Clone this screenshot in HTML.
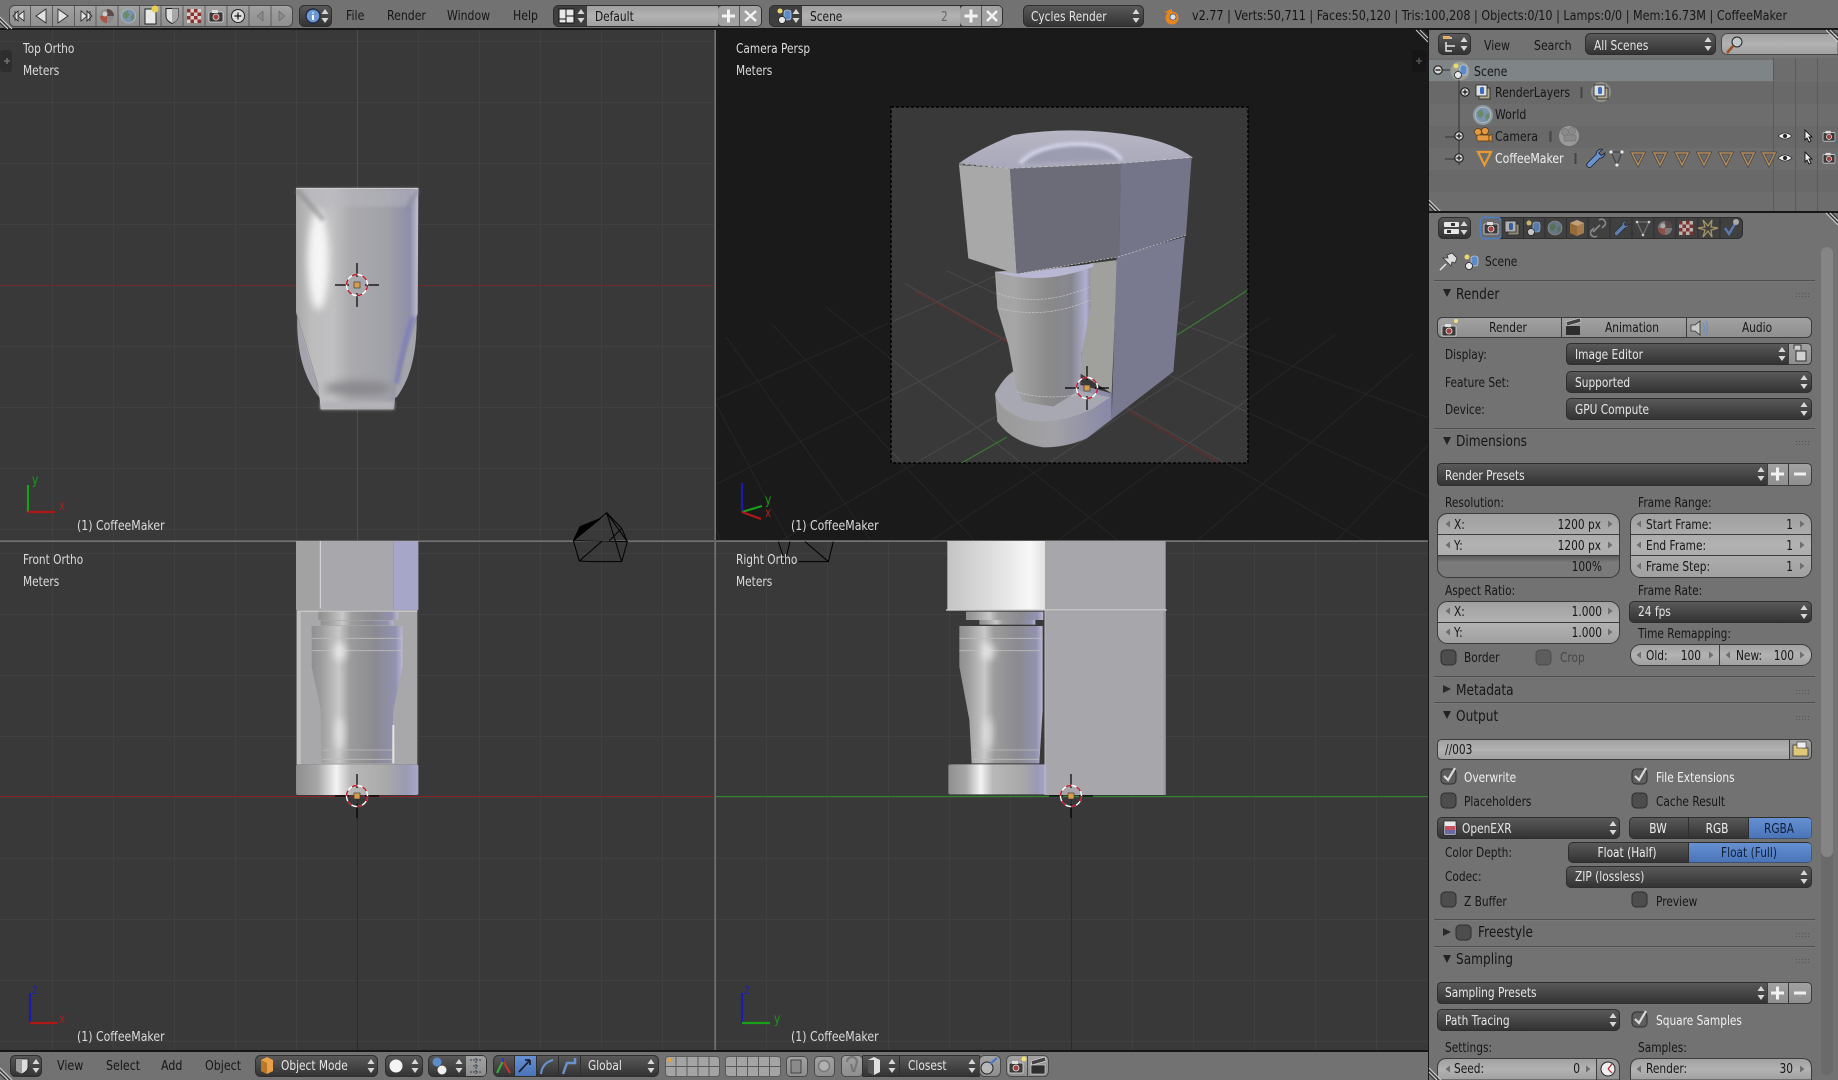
<!DOCTYPE html>
<html><head><meta charset="utf-8"><title>Blender</title>
<style>
html,body{margin:0;padding:0;background:#727272;width:1838px;height:1080px;overflow:hidden}
body{filter:blur(.35px)}
svg{position:absolute;left:0;top:0}
span{position:absolute;white-space:nowrap;font:13.5px/16px "DejaVu Sans",sans-serif;height:16px;color:#161616;transform:scaleX(.785);transform-origin:0 50%}
.n{transform:scaleX(.81)}
.w{color:#e6e6e6}
.v{color:#dcdcdc}
.h{font-size:15.5px}
.c{transform:translateX(-50%) scaleX(.785);transform-origin:50% 50%}
.r{transform:translateX(-100%) scaleX(.785);transform-origin:100% 50%}
.f{color:#474747}
.k{color:#f0f0f0}
</style></head><body>
<svg width="1838" height="1080" viewBox="0 0 1838 1080" xmlns="http://www.w3.org/2000/svg">
<defs>
<linearGradient id="gd" x1="0" y1="0" x2="0" y2="1"><stop offset="0" stop-color="#5a5a5a"/><stop offset="1" stop-color="#323232"/></linearGradient>
<linearGradient id="gl" x1="0" y1="0" x2="0" y2="1"><stop offset="0" stop-color="#a0a0a0"/><stop offset=".5" stop-color="#b2b2b2"/><stop offset="1" stop-color="#a0a0a0"/></linearGradient>
<linearGradient id="gb" x1="0" y1="0" x2="0" y2="1"><stop offset="0" stop-color="#a2a2a2"/><stop offset="1" stop-color="#8e8e8e"/></linearGradient>
<linearGradient id="gm" x1="0" y1="0" x2="0" y2="1"><stop offset="0" stop-color="#5a5a5a"/><stop offset=".3" stop-color="#7a7a7a"/><stop offset="1" stop-color="#7a7a7a"/></linearGradient>
<linearGradient id="ga" x1="0" y1="0" x2="0" y2="1"><stop offset="0" stop-color="#6590d2"/><stop offset="1" stop-color="#4a74b8"/></linearGradient>
<linearGradient id="gt" x1="0" y1="0" x2="1" y2="0"><stop offset="0" stop-color="#a8a8a8"/><stop offset=".12" stop-color="#bcbcbc"/><stop offset=".3" stop-color="#c0c0c2"/><stop offset=".45" stop-color="#aaaaae"/><stop offset=".75" stop-color="#a0a0a8"/><stop offset=".93" stop-color="#8f8fa8"/><stop offset="1" stop-color="#c0c0d0"/></linearGradient>
<linearGradient id="gc" x1="0" y1="0" x2="1" y2="0"><stop offset="0" stop-color="#8f8f8f"/><stop offset=".1" stop-color="#9c9c9c"/><stop offset=".3" stop-color="#c8c8c8"/><stop offset=".42" stop-color="#9c9c9c"/><stop offset=".7" stop-color="#8a8a90"/><stop offset=".92" stop-color="#9292b0"/><stop offset="1" stop-color="#b8b8d0"/></linearGradient>
<linearGradient id="gbase" x1="0" y1="0" x2="1" y2="0"><stop offset="0" stop-color="#8e8e8e"/><stop offset=".18" stop-color="#a8a8a8"/><stop offset=".33" stop-color="#f4f4f4"/><stop offset=".45" stop-color="#b8b8b8"/><stop offset=".75" stop-color="#a8a8a8"/><stop offset=".9" stop-color="#9a9ab4"/><stop offset="1" stop-color="#a8a8c8"/></linearGradient>
<linearGradient id="ghd" x1="0" y1="0" x2="1" y2="0"><stop offset="0" stop-color="#c4c4c4"/><stop offset=".5" stop-color="#e0e0e0"/><stop offset=".85" stop-color="#f8f8f8"/><stop offset="1" stop-color="#e0e0e0"/></linearGradient>
<linearGradient id="gdome" x1="0" y1="0" x2="0" y2="1"><stop offset="0" stop-color="#b6b6c4"/><stop offset="1" stop-color="#a8a8ba"/></linearGradient>
<linearGradient id="gcup3" x1="0" y1="0" x2="1" y2="0"><stop offset="0" stop-color="#a4a4a4"/><stop offset=".2" stop-color="#a6a6a6"/><stop offset=".55" stop-color="#8a8a8a"/><stop offset=".8" stop-color="#86868f"/><stop offset=".95" stop-color="#b0b0d0"/><stop offset="1" stop-color="#9090a0"/></linearGradient>
<linearGradient id="gbase3" x1="0" y1="0" x2="1" y2="0"><stop offset="0" stop-color="#9a9a9a"/><stop offset=".5" stop-color="#a2a2a6"/><stop offset="1" stop-color="#8888a8"/></linearGradient>
<filter id="bl" x="-50%" y="-50%" width="200%" height="200%"><feGaussianBlur stdDeviation="12"/></filter>
<filter id="bs" x="-50%" y="-50%" width="200%" height="200%"><feGaussianBlur stdDeviation="5"/></filter>

<g id="ud"><path d="M0-7L3.5-2H-3.5ZM0 7L3.5 2H-3.5Z" fill="#d8d8d8"/></g>
<path id="la" d="M3-3.5V3.5L-1.5 0Z" fill="#6e6e6e"/>
<path id="ra" d="M-3-3.5V3.5L1.5 0Z" fill="#6e6e6e"/>
<g id="cur">
<path d="M-22 0H-8M8 0H22M0-22V-8M0 8V22" stroke="#000" stroke-width="1.2"/>
<circle r="10.5" fill="none" stroke="#fff" stroke-width="1.4"/>
<circle r="10.5" fill="none" stroke="#c01828" stroke-width="1.4" stroke-dasharray="5.5 5.5"/>
<rect x="-3" y="-3" width="6" height="6" fill="#d89c4c" stroke="#333" stroke-width=".6"/>
</g>
<g id="hat" stroke-width="1"><path d="M0 0L12 12M4 0L12 8" stroke="#cfcfcf"/><path d="M2 0L12 10M6 0L12 6" stroke="#333"/></g>
<g id="hat2" stroke-width="1"><path d="M0 0L12 12M0 4L8 12" stroke="#cfcfcf"/><path d="M0 2L10 12M0 6L6 12" stroke="#333"/></g>
<g id="cam"><rect x="-7" y="-4" width="14" height="10" rx="1" fill="#3a3a3a" stroke="#ddd" stroke-width=".8"/><rect x="-4" y="-6" width="6" height="3" fill="#ddd"/><circle r="3" cy="1" fill="#a04040" stroke="#eee" stroke-width=".8"/></g>
<g id="sph"><circle r="7" fill="#8a8a8a"/><path d="M0-7A7 7 0 0 1 7 0H0Z" fill="#5e4a4a"/><path d="M0 0V7A7 7 0 0 1-7 0Z" fill="#a85448"/><circle cx="-2" cy="-2" r="2.5" fill="#ccc"/></g>
<g id="glob"><circle r="7" fill="#7a94ae" stroke="#c8c8c8" stroke-width=".6"/><path d="M-5-3L-1-5 1-1-2 3-5 1ZM2 0L5-2 6 2 3 5Z" fill="#6a8a6a"/></g>
<g id="chk"><rect x="-7" y="-7" width="14" height="14" fill="#d8d0cc"/><path d="M-7-7h3.500v3.500h-3.500zM0-7h3.500v3.500h-3.500zM-3.500-3.500h3.500v3.500h-3.500zM3.500-3.500h3.500v3.500h-3.500zM-7 0h3.500v3.500h-3.500zM0 0h3.500v3.500h-3.500zM-3.500 3.500h3.500v3.500h-3.500zM3.500 3.500h3.500v3.500h-3.500z" fill="#8e3030"/></g>
<g id="shd"><path d="M-6-7H6V1Q6 5 0 8-6 5-6 1Z" fill="#dedede" stroke="#222" stroke-width="1"/><path d="M0-7H6V1Q6 5 0 8Z" fill="#a8a8a8"/></g>
<g id="tri"><path d="M-6-5H6L0 7Z" fill="none" stroke="#4a4a4a" stroke-width="3"/><path d="M-6-5H6L0 7Z" fill="none" stroke="#b58a58" stroke-width="1.400"/></g>
<g id="scn"><circle cx="-5" cy="-5" r="2.500" fill="#e8d870"/><rect x="-1" y="-6" width="7" height="10" rx="2.500" fill="#5c8cc8" stroke="#dde" stroke-width=".6"/><circle cx="-3" cy="4" r="3.500" fill="#e8e8e8" stroke="#222" stroke-width=".8"/></g>
<g id="rl"><rect x="-4" y="-4" width="11" height="11" fill="#b4a890" stroke="#222" stroke-width=".8"/><rect x="-7" y="-7" width="11" height="11" fill="#dedede" stroke="#222" stroke-width=".8"/><rect x="-3" y="-5" width="4" height="7" rx="1.500" fill="#3a6cc0"/></g>
<g id="wrn"><path d="M6-7A4 4 0 0 0 1-3L-6 4A2 2 0 0 0-3 7L4 0A4 4 0 0 0 8-4L5-2 3-4Z" fill="#6a94d0" stroke="#223" stroke-width=".7"/></g>
<g id="plus"><path d="M0-6.500V6.500M-6.500 0H6.500" stroke="#f2f2f2" stroke-width="3"/></g>
<g id="eye"><path d="M-7 0Q0-6 7 0 0 6-7 0Z" fill="#f0f0f0" stroke="#222" stroke-width=".8"/><circle r="2" fill="#222"/></g>
<path id="arw" d="M-3-6V4L-1 2 1 6 3 5 1 1H4Z" fill="#f0f0f0" stroke="#111" stroke-width=".9"/>
<g id="cb"><rect width="15" height="15" rx="4" fill="#4d4d4d" stroke="#2e2e2e" stroke-width="1"/></g>
<g id="cbc"><rect width="15" height="15" rx="4" fill="#5e5e5e" stroke="#2e2e2e" stroke-width="1"/><path d="M3 7L7 11 14-1" fill="none" stroke="#dcdcdc" stroke-width="2.200"/></g>
<g id="dots" fill="#555"><path d="M0 0h1v1h-1zM3 0h1v1h-1zM6 0h1v1h-1zM9 0h1v1h-1zM12 0h1v1h-1zM0 3h1v1h-1zM3 3h1v1h-1zM6 3h1v1h-1zM9 3h1v1h-1zM12 3h1v1h-1z"/></g>
<path id="td" d="M0 0H8L4 8Z" fill="#222"/>
<path id="tr" d="M0-4V4L8 0Z" fill="#2a2a2a"/>

<pattern id="grd1" width="61" height="61" patternUnits="userSpaceOnUse" x="52" y="41"><path d="M0 .5H61M.5 0V61" stroke="#404040" stroke-width="1" fill="none"/></pattern>
<pattern id="grd2" width="61" height="61" patternUnits="userSpaceOnUse" x="52" y="553"><path d="M0 .5H61M.5 0V61" stroke="#404040" stroke-width="1" fill="none"/></pattern>
<pattern id="grd3" width="61" height="61" patternUnits="userSpaceOnUse" x="766" y="553"><path d="M0 .5H61M.5 0V61" stroke="#404040" stroke-width="1" fill="none"/></pattern>
<clipPath id="cf"><rect x="892" y="108" width="356" height="355"/></clipPath>
<clipPath id="cv"><rect x="716" y="30" width="712" height="510"/></clipPath>
<clipPath id="cfield"><polygon points="700,345 1000,255 1440,360 1440,560 700,560"/></clipPath>
<clipPath id="gr1"><rect x="1437" y="513" width="183" height="65" rx="11"/></clipPath>
<g id="persp" clip-path="url(#cfield)" fill="none" stroke-width="1">
<path d="M545 82L1545 182M545 82L1545 262M545 82L1545 332M545 82L1545 392M545 82L1545 462M545 82L1545 552M545 82L1545 642M545 82L1345 722M545 82L1145 722M545 82L1000 722M545 82L885 722M545 82L790 722M545 82L700 722"/>
<path d="M2032-183L632 57M2032-183L632 137M2032-183L632 207M2032-183L632 287M2032-183L632 357M2032-183L632 437M2032-183L632 527M2032-183L632 627M2032-183L632 737M2032-183L632 857M2032-183L832 857M2032-183L1032 857"/>
</g>
</defs>

<!-- top header -->
<rect width="1838" height="1080" fill="#727272"/>
<rect y="28" width="1838" height="2" fill="#161616"/>
<rect x="9.500" y="5.500" width="283" height="21" rx="5" fill="url(#gb)" stroke="#4a4a4a"/>
<path d="M30.500 6V26M52.500 6V26M74.500 6V26M96 6V26M118 6V26M139.500 6V26M161 6V26M183 6V26M205 6V26M227 6V26M249 6V26M271 6V26" stroke="#5c5c5c"/>
<g fill="#e4e4e4" stroke="#222" stroke-width=".8">
<path d="M15 11V21M24 11V21L18 16ZM18 11V21L13 16Z"/>
<path d="M46 9V23L36 16Z"/>
<path d="M58 9V23L68 16Z"/>
<path d="M90 11V21M81 11V21L87 16ZM87 11V21L92 16Z"/>
</g>
<use href="#sph" x="107" y="16"/><use href="#glob" x="128.500" y="16"/>
<path d="M145 9H153L156 12V24H145Z" fill="#e8e8e8" stroke="#222"/><circle cx="155" cy="9" r="3.500" fill="#e8d050"/>
<use href="#shd" x="172" y="15.500"/><use href="#chk" x="194" y="16"/><use href="#cam" x="216" y="16"/>
<circle cx="238" cy="16" r="6.500" fill="#dedede" stroke="#222"/><path d="M238 12.500V19.500M234.500 16H241.500" stroke="#111" stroke-width="1.200"/>
<path d="M263 11V21L257 16Z" fill="#8a8a8a" stroke="#555" stroke-width=".5"/><path d="M279 11V21L285 16Z" fill="#8a8a8a" stroke="#555" stroke-width=".5"/>

<rect x="299.500" y="5.500" width="32" height="21" rx="5" fill="url(#gd)" stroke="#2e2e2e"/>
<circle cx="313" cy="16" r="7" fill="#6c98d4" stroke="#1d2a44" stroke-width="1.400"/><path d="M313 12.500V13.500M313 15V20" stroke="#fff" stroke-width="2"/><use href="#ud" x="325" y="16"/>

<rect x="553.500" y="5.500" width="208" height="21" rx="5" fill="#3f3f3f" stroke="#2e2e2e"/>
<rect x="587" y="6" width="131" height="20" fill="url(#gl)"/>
<rect x="718" y="6" width="43" height="20" rx="4" fill="#a2a2a2"/><path d="M739.500 6V26" stroke="#555"/>
<rect x="559" y="9" width="15" height="14" fill="#e8e8e8" stroke="#111"/><path d="M566 9V23M566 16H574M559 19H566" stroke="#111"/><use href="#ud" x="581" y="16"/>
<use href="#plus" x="728.500" y="16"/><path d="M745 11L756 21M756 11L745 21" stroke="#f2f2f2" stroke-width="2.500"/>

<rect x="769.500" y="5.500" width="233" height="21" rx="5" fill="#3f3f3f" stroke="#2e2e2e"/>
<rect x="802" y="6" width="158" height="20" fill="url(#gl)"/>
<rect x="960" y="6" width="42" height="20" rx="4" fill="#a2a2a2"/><path d="M981.500 6V26" stroke="#555"/>
<use href="#scn" x="785" y="16"/><use href="#ud" x="796" y="16"/>
<use href="#plus" x="971" y="16"/><path d="M987 11L997 21M997 11L987 21" stroke="#f2f2f2" stroke-width="2.500"/>

<rect x="1023.500" y="5.500" width="120" height="21" rx="5" fill="url(#gd)" stroke="#2e2e2e"/><use href="#ud" x="1136" y="16"/>
<circle cx="1172" cy="18" r="6.500" fill="#e8841c"/><path d="M1164 12L1172 9 1172 14" fill="#e8841c"/><circle cx="1173" cy="17" r="3" fill="#d8e0ea" stroke="#3a5a8a" stroke-width=".8"/>

<!-- viewports -->
<rect y="30" width="714" height="510" fill="#393939"/><rect y="30" width="714" height="510" fill="url(#grd1)"/>
<rect y="542" width="714" height="508" fill="#393939"/><rect y="542" width="714" height="508" fill="url(#grd2)"/>
<rect x="716" y="542" width="712" height="508" fill="#393939"/><rect x="716" y="542" width="712" height="508" fill="url(#grd3)"/>
<rect x="716" y="30" width="712" height="510" fill="#1a1a1a"/>
<g clip-path="url(#cv)"><use href="#persp" stroke="#252525"/></g>
<rect x="891" y="107" width="357" height="356" fill="#393939"/>
<g clip-path="url(#cf)"><use href="#persp" stroke="#494949"/>
<path d="M915 291L1007 342M1127 410L1220 463" stroke="#6a2c2c" stroke-width="1.200"/>
<path d="M1248 290L1177 335M1007 437L953 468" stroke="#3b7a33" stroke-width="1.200"/>
</g>
<rect x="891" y="107" width="357" height="356" fill="none" stroke="#000" stroke-width="1.500" stroke-dasharray="3 2"/>
<path d="M714.500 30V1050M0 540.500H1428" stroke="#5e5e5e" stroke-width="1"/>
<path d="M1428.500 30V1080" stroke="#161616"/>
<rect y="1050" width="1428" height="2" fill="#161616"/>

<!-- axis lines -->
<path d="M357.500 30V540" stroke="#276a27"/>
<path d="M0 285.500H714" stroke="#6c2a2a"/>
<path d="M0 796.500H714" stroke="#8a1f1f" stroke-width="1"/>
<path d="M357.500 796V1050" stroke="#1e1e8e" stroke-width="1"/>
<path d="M716 796.500H1428" stroke="#2a8a2a" stroke-width="1"/>
<path d="M1071.500 796V1050" stroke="#1e1e8e" stroke-width="1"/>
<rect x="0" y="50" width="12" height="22" rx="3" fill="#2e2e2e"/><path d="M7 58V64M4 61H10" stroke="#6e6e6e" stroke-width="1.600"/>
<rect x="1412" y="50" width="14" height="22" rx="3" fill="#161616"/><path d="M1416 61H1422M1419 58V64" stroke="#505050" stroke-width="1.600"/>

<!-- top view model -->
<g transform="translate(280,170) scale(.33333)">
<path d="M52 430C48 540 70 620 118 682L350 682C395 620 412 540 410 430Z" fill="#a4a4ac"/>
<path d="M48 55L415 55 413 430Q395 470 350 640L342 718 122 718 115 650Q70 520 48 425Z" fill="url(#gt)"/>
<ellipse cx="115" cy="270" rx="32" ry="150" fill="#fff" opacity=".85" filter="url(#bl)"/>
<path d="M48 55L415 55 395 110 120 110Z" fill="#b8b8c0" opacity=".5" filter="url(#bs)"/>
<path d="M52 60L130 150" stroke="#8e8e92" stroke-width="16" filter="url(#bs)" opacity=".6"/>
<path d="M412 60L380 120" stroke="#8686a0" stroke-width="14" filter="url(#bs)" opacity=".6"/>
<ellipse cx="232" cy="655" rx="100" ry="22" fill="#808084" opacity=".75" filter="url(#bl)"/>
<rect x="122" y="695" width="220" height="23" fill="#b4b4b8" filter="url(#bs)"/>
<path d="M400 440Q370 520 350 640" stroke="#8080b8" stroke-width="14" fill="none" filter="url(#bs)"/>
<path d="M48 425L115 650M413 430L350 640" stroke="#8d8d92" stroke-width="2" fill="none"/>
<path d="M48 55L415 55" stroke="#d0d0d0" stroke-width="3"/>
</g>
<use href="#cur" x="357" y="285"/>

<!-- front view model -->
<g transform="translate(280,530) scale(.33333)">
<rect x="48" y="33" width="74" height="207" fill="#a2a2a2"/>
<rect x="122" y="33" width="218" height="207" fill="#a8a8ac"/>
<rect x="340" y="33" width="75" height="207" fill="#a6a6c8"/>
<path d="M121 33V236" stroke="#e0e0e0" stroke-width="3"/>
<rect x="50" y="241" width="362" height="462" fill="#a8a8aa"/>
<rect x="50" y="241" width="362" height="4" fill="#d8d8d8"/>
<rect x="50" y="241" width="12" height="462" fill="#c0c0c0"/>
<rect x="115" y="245" width="240" height="25" fill="url(#gc)"/>
<rect x="122" y="272" width="218" height="14" fill="url(#gc)"/>
<path d="M95 288H368V410L340 540 335 700H125L122 540 95 410Z" fill="url(#gc)"/>
<path d="M95 325H368M95 362H368M128 660H335M128 688H335" stroke="#bcbcbc" stroke-width="2.500"/>
<ellipse cx="180" cy="610" rx="14" ry="50" fill="#fff" opacity=".5" filter="url(#bl)"/>
<ellipse cx="180" cy="365" rx="20" ry="26" fill="#fff" opacity=".6" filter="url(#bl)"/>
<rect x="337" y="585" width="6" height="115" fill="#e4e4e4"/>
<rect x="48" y="703" width="367" height="92" rx="6" fill="url(#gbase)"/>
</g>
<use href="#cur" x="357" y="796"/>

<!-- right view model -->
<g transform="translate(930,530) scale(.33333)">
<rect x="52" y="33" width="293" height="207" fill="url(#ghd)"/>
<rect x="345" y="33" width="362" height="207" fill="#a7a7ab"/>
<rect x="48" y="238" width="662" height="4" fill="#d0d0d0"/>
<rect x="345" y="242" width="362" height="553" fill="#a6a6ab"/>
<rect x="700" y="242" width="7" height="553" fill="#9a9aa6"/>
<rect x="108" y="245" width="232" height="25" fill="url(#gc)"/>
<rect x="148" y="270" width="168" height="14" fill="url(#gc)"/>
<path d="M88 288H338V540L328 700H125L118 570 88 410Z" fill="url(#gc)"/>
<path d="M88 325H338M88 362H330M128 660H328M128 688H328" stroke="#bcbcbc" stroke-width="2.500"/>
<ellipse cx="175" cy="610" rx="14" ry="50" fill="#fff" opacity=".5" filter="url(#bl)"/>
<ellipse cx="175" cy="365" rx="20" ry="26" fill="#fff" opacity=".6" filter="url(#bl)"/>
<rect x="55" y="703" width="295" height="90" rx="6" fill="url(#gbase)"/>
<path d="M345 240V795" stroke="#bcbcbc" stroke-width="3"/>
</g>
<use href="#cur" x="1071" y="796"/>

<!-- camera view model -->
<g transform="translate(880,100) scale(.33333)">
<path d="M345 880Q380 815 420 805L695 880 695 958 620 1015Q560 1042 490 1042 400 1030 352 965Z" fill="url(#gbase3)"/>
<path d="M345 885Q380 815 420 810L500 850 690 892 640 925Q560 965 470 965 370 950 345 885Z" fill="#a8a8b2"/>
<path d="M630 490L712 480 695 880 600 820Z" fill="#a0a09c"/>
<path d="M345 515L630 495 632 620 605 760 600 870 520 920 430 905 410 870 385 735 352 625Z" fill="url(#gcup3)"/>
<path d="M352 580Q480 625 632 560M358 625Q490 660 632 600M410 875Q480 900 590 885" stroke="#c4c4c4" stroke-width="2" fill="none" stroke-dasharray="8 3"/>
<path d="M345 515Q480 560 640 500L640 490 420 520Z" fill="#b8b8d4"/>
<path d="M710 470L915 410 880 815 695 958Z" fill="#797990"/>
<path d="M237 195L390 205 410 522 265 475Z" fill="#a8a8a8"/>
<path d="M390 205L722 190 718 470 410 522Z" fill="#6c6c78"/>
<path d="M722 190L935 172 918 405 718 470Z" fill="#75758a"/>
<path d="M237 190Q290 150 400 105 590 75 780 110 880 130 938 172L722 190 390 205Z" fill="url(#gdome)"/>
<path d="M420 190Q470 135 590 132 690 130 725 180Z" fill="#9c9cb0" filter="url(#bs)"/>
<path d="M420 190Q470 135 590 132 690 130 725 180" fill="none" stroke="#d4d4ec" stroke-width="12" filter="url(#bs)"/>
<path d="M237 192L390 205 722 190 938 172" stroke="#c8c8c8" stroke-width="2" fill="none" stroke-dasharray="12 5"/>
<path d="M410 522L718 470 918 405" stroke="#d4d4d4" stroke-width="2" fill="none" stroke-dasharray="6 5"/>
</g>
<use href="#cur" x="1087" y="388"/>

<!-- wire cameras -->
<g transform="translate(540,490) scale(.33333)" fill="none" stroke="#000" stroke-width="3">
<path d="M100 152L200 68 245 115 262 155 245 215 155 215 118 213 100 152M200 68L245 215M200 68L262 155M245 115L208 152M118 213L188 152M100 152L262 155"/>
<path d="M100 152L120 110 182 85 100 152Z" fill="#000"/>
<path d="M715 155L735 215 750 155M795 155L865 215 880 155M775 215H865"/>
</g>

<!-- axis widgets -->
<g fill="none" stroke-width="2.200">
<path d="M28 512V485" stroke="#18a018"/><path d="M28 512H55" stroke="#b01818"/>
<path d="M742 512V483" stroke="#1a1ab0"/><path d="M742 512L762 506" stroke="#18a018"/><path d="M742 512L761 519" stroke="#b01818"/>
<path d="M30 1023V993" stroke="#1a1ab0"/><path d="M30 1023H58" stroke="#b01818"/>
<path d="M742 1023V993" stroke="#1a1ab0"/><path d="M742 1023H770" stroke="#18a018"/>
</g>

<!-- outliner -->
<rect x="1429" y="30" width="409" height="182" fill="#727272"/>
<rect x="1429" y="58" width="409" height="154" fill="#6d6d6d"/>
<rect x="1429" y="82" width="409" height="22" fill="#696969"/>
<rect x="1429" y="126" width="409" height="22" fill="#696969"/>
<rect x="1429" y="170" width="409" height="22" fill="#696969"/>
<rect x="1429" y="60" width="344" height="21" fill="#7f8487"/>
<path d="M1773.500 58V212M1795.500 58V212M1817.500 58V212" stroke="#5a5a5a"/>
<rect x="1438.500" y="33.500" width="32" height="21" rx="5" fill="url(#gd)" stroke="#2e2e2e"/>
<path d="M1444 38H1452M1446 42V51H1452M1446 46H1455" stroke="#e4e4e4" stroke-width="1.500" fill="none"/><rect x="1443" y="36" width="7" height="3" fill="#e8b060"/><use href="#ud" x="1464" y="44"/>
<rect x="1585.500" y="33.500" width="130" height="21" rx="5" fill="url(#gd)" stroke="#2e2e2e"/><use href="#ud" x="1708" y="44"/>
<path d="M1721.500 40Q1721.500 33.500 1728 33.500H1838V54.500H1728Q1721.500 54.500 1721.500 48Z" fill="url(#gl)" stroke="#4a4a4a"/>
<circle cx="1737" cy="42" r="5" fill="#c0c8cc" stroke="#222"/><path d="M1733 46L1727 53" stroke="#a05020" stroke-width="2.500"/>
<path d="M1438 70H1450M1459 70V165M1459 93H1463M1445 137H1458M1445 159H1458" stroke="#333" fill="none"/>
<circle cx="1438" cy="70" r="4.200" fill="#d8d8d8" stroke="#222" stroke-width="1.200"/><path d="M1435.500 70H1440.500" stroke="#111" stroke-width="1.300"/>
<circle cx="1460" cy="71" r="9.500" fill="#a4a89c" opacity=".7"/><use href="#scn" x="1461" y="71"/>
<circle cx="1465" cy="92" r="4.200" fill="#d8d8d8" stroke="#222" stroke-width="1.200"/><path d="M1462.500 92H1467.500M1465 89.500V94.500" stroke="#111" stroke-width="1.200"/>
<use href="#rl" x="1483" y="92"/>
<path d="M1581.500 87V98" stroke="#444" stroke-width="2"/>
<circle cx="1601" cy="92" r="10" fill="#9a9a94" opacity=".8"/><use href="#rl" x="1601" y="92"/>
<circle cx="1483" cy="115" r="10" fill="#8e9aa2"/><g transform="translate(1483,115) scale(1.1)"><use href="#glob"/></g>
<circle cx="1459" cy="136" r="4.200" fill="#d8d8d8" stroke="#222" stroke-width="1.200"/><path d="M1456.500 136H1461.500M1459 133.500V138.500" stroke="#111" stroke-width="1.200"/>
<g fill="#e49a40" stroke="#5a3a10" stroke-width=".7"><circle cx="1478" cy="132" r="3.500"/><circle cx="1485" cy="131" r="3.500"/><rect x="1477" y="135" width="12" height="6" rx="1"/><path d="M1489 136L1492 134V142L1489 140Z"/></g>
<path d="M1550.500 131V142" stroke="#444" stroke-width="2"/>
<circle cx="1569" cy="136" r="10" fill="#9a9a9a"/><g fill="#8a8a8a" stroke="#777" stroke-width=".7"><circle cx="1565" cy="132" r="3.500"/><circle cx="1572" cy="131" r="3.500"/><rect x="1564" y="135" width="12" height="6" rx="1"/></g>
<circle cx="1459" cy="158" r="4.200" fill="#d8d8d8" stroke="#222" stroke-width="1.200"/><path d="M1456.500 158H1461.500M1459 155.500V160.500" stroke="#111" stroke-width="1.200"/>
<path d="M1478 152H1491L1484.500 165Z" fill="none" stroke="#e89a30" stroke-width="2.200"/>
<path d="M1575.500 153V164" stroke="#444" stroke-width="2"/>
<g transform="translate(1595,158) scale(1.25)"><use href="#wrn"/></g>
<path d="M1611 152H1622L1617 165Z" fill="none" stroke="#444" stroke-width="1.200"/><circle cx="1611" cy="152" r="1.600" fill="#e8e8e8"/><circle cx="1622" cy="152" r="1.600" fill="#e8e8e8"/><circle cx="1617" cy="165" r="1.600" fill="#e8e8e8"/>
<use href="#tri" x="1638" y="158"/><use href="#tri" x="1660" y="158"/><use href="#tri" x="1682" y="158"/><use href="#tri" x="1704" y="158"/><use href="#tri" x="1726" y="158"/><use href="#tri" x="1748" y="158"/><use href="#tri" x="1769" y="158"/>
<use href="#eye" x="1785" y="136"/><use href="#eye" x="1785" y="158"/>
<use href="#arw" x="1808" y="136"/><use href="#arw" x="1808" y="158"/>
<g transform="translate(1829,136) scale(.85)"><use href="#cam"/></g><g transform="translate(1829,158) scale(.85)"><use href="#cam"/></g>
<use href="#hat" x="1416" y="30"/><use href="#hat" x="1826" y="30"/><use href="#hat2" x="1429" y="200"/>
<use href="#hat2" x="0" y="17"/><use href="#hat2" x="0" y="1068"/>

<!-- properties header -->
<rect x="1429" y="211" width="409" height="2" fill="#161616"/>
<use href="#hat" x="1826" y="213"/>
<rect x="1438.500" y="217.500" width="32" height="21" rx="5" fill="url(#gd)" stroke="#2e2e2e"/>
<rect x="1444" y="222" width="15" height="5" rx="1" fill="#e8e8e8"/><rect x="1444" y="229" width="15" height="5" rx="1" fill="#e8e8e8"/><rect x="1451" y="223" width="4" height="3" fill="#333"/><rect x="1447" y="230" width="4" height="3" fill="#333"/><use href="#ud" x="1464" y="228"/>
<rect x="1480.500" y="217.500" width="262" height="21" rx="5" fill="#404040" stroke="#2e2e2e"/>
<rect x="1480.500" y="217.500" width="21" height="21" rx="4" fill="#6a6a6a" stroke="#4a80c8" stroke-width="1.500"/>
<path d="M1502 218V238M1523.500 218V238M1545 218V238M1566.500 218V238M1588 218V238M1610 218V238M1632 218V238M1654 218V238M1676 218V238M1698 218V238M1720 218V238" stroke="#2e2e2e"/>
<use href="#cam" x="1491" y="228"/>
<g opacity=".7"><use href="#rl" x="1512" y="228"/></g>
<g opacity=".8"><use href="#scn" x="1534" y="228"/></g>
<g opacity=".65"><use href="#glob" x="1555" y="228"/></g>
<g opacity=".8"><path d="M1570 223L1577 220 1584 223V233L1577 236 1570 233Z" fill="#c08c50"/><path d="M1570 223L1577 226 1584 223 1577 220Z" fill="#e0b888"/><path d="M1577 226V236L1570 233V223Z" fill="#a87838"/></g>
<path d="M1593 232L1600 225M1597 236A4 4 0 0 1 1591 231L1594 228M1599 220A4 4 0 0 1 1605 225L1602 228" fill="none" stroke="#8a8a8a" stroke-width="1.600"/>
<use href="#wrn" x="1621" y="228" opacity=".75"/>
<path d="M1637 222H1649L1643 235Z" fill="none" stroke="#7a7a7a"/><circle cx="1637" cy="222" r="1.300" fill="#ccc"/><circle cx="1649" cy="222" r="1.300" fill="#ccc"/><circle cx="1643" cy="235" r="1.300" fill="#ccc"/>
<g opacity=".75"><use href="#sph" x="1665" y="228"/></g>
<g opacity=".8"><use href="#chk" x="1686" y="228"/></g>
<path d="M1703 220L1705 227 1698 228 1705 230 1703 237 1708 231 1712 237 1711 230 1718 228 1711 227 1712 220 1708 226Z" fill="none" stroke="#a89868" stroke-width="1.200"/>
<path d="M1725 228L1729 234 1736 222" stroke="#5a7ab0" stroke-width="2.400" fill="none"/><circle cx="1736" cy="222" r="3" fill="#aaa"/>

<!-- props top -->
<path d="M1440 270L1446 264" stroke="#e8e8e8" stroke-width="1.500" fill="none"/>
<path d="M1443 258L1451 266 1452 262 1455 263 1457 258 1452 253 1447 255 1448 258Z" fill="#dcdcdc" stroke="#333" stroke-width=".8"/>
<use href="#scn" x="1472" y="262"/>
<path d="M1434 280.500H1815M1434 428.500H1815M1434 676.500H1815M1434 702.500H1815M1434 919.500H1815M1434 946.500H1815" stroke="#4e4e4e" stroke-width="1"/>
<path d="M1434 281.500H1815M1434 429.500H1815M1434 677.500H1815M1434 703.500H1815M1434 920.500H1815M1434 947.500H1815" stroke="#808080" stroke-width="1" opacity=".5"/>
<!-- scrollbar -->
<rect x="1821" y="247" width="12" height="828" rx="6" fill="#6a6a6a"/>
<rect x="1821" y="247" width="12" height="610" rx="6" fill="#858585"/>
<!-- panel arrows -->
<use href="#td" x="1443" y="289"/><use href="#td" x="1443" y="437"/><use href="#tr" x="1443" y="689"/><use href="#td" x="1443" y="711"/><use href="#tr" x="1443" y="932"/><use href="#td" x="1443" y="955"/>
<use href="#dots" x="1796" y="293"/><use href="#dots" x="1796" y="441"/><use href="#dots" x="1796" y="690"/><use href="#dots" x="1796" y="716"/><use href="#dots" x="1796" y="933"/><use href="#dots" x="1796" y="959"/>

<!-- render buttons -->
<rect x="1437.500" y="317.500" width="374" height="20" rx="5" fill="url(#gb)" stroke="#3c3c3c"/>
<path d="M1561.500 318V337M1686.500 318V337" stroke="#3c3c3c"/>
<use href="#cam" x="1449" y="330"/><circle cx="1456" cy="321" r="2" fill="#f0e080"/>
<rect x="1566" y="326" width="14" height="9" fill="#2e2e2e"/><path d="M1566 322L1580 318 1581 322 1567 326Z" fill="#444" stroke="#eee" stroke-width=".5"/>
<path d="M1691 325H1695L1700 321V335L1695 331H1691Z" fill="#c8c8c8" stroke="#333" stroke-width=".8"/><path d="M1703 323Q1706 328 1703 333M1706 321Q1709 328 1706 335" stroke="#6a8cc8" fill="none" stroke-width="1.200"/>

<!-- dropdowns -->
<g fill="url(#gd)" stroke="#2e2e2e">
<path d="M1566.500 348Q1566.500 343.500 1571 343.500H1788.500V364.500H1571Q1566.500 364.500 1566.500 360Z"/>
<rect x="1566.500" y="371.500" width="245" height="21" rx="4.500"/>
<rect x="1566.500" y="398.500" width="245" height="21" rx="4.500"/>
<path d="M1437.500 468Q1437.500 463.500 1442 463.500H1767.500V485.500H1442Q1437.500 485.500 1437.500 481Z"/>
<rect x="1629.500" y="601.500" width="182" height="21" rx="4.500"/>
<rect x="1437.500" y="817.500" width="182" height="21" rx="4.500"/>
<rect x="1566.500" y="866.500" width="245" height="21" rx="4.500"/>
<path d="M1437.500 987Q1437.500 982.500 1442 982.500H1767.500V1003.500H1442Q1437.500 1003.500 1437.500 999Z"/>
<rect x="1437.500" y="1009.500" width="182" height="21" rx="4.500"/>
</g>
<use href="#ud" x="1782" y="354"/><use href="#ud" x="1804" y="382"/><use href="#ud" x="1804" y="409"/><use href="#ud" x="1761" y="474"/><use href="#ud" x="1804" y="612"/><use href="#ud" x="1613" y="828"/><use href="#ud" x="1804" y="877"/><use href="#ud" x="1761" y="993"/><use href="#ud" x="1613" y="1020"/>
<path d="M1788.500 343.500H1807Q1811.500 343.500 1811.500 348V360Q1811.500 364.500 1807 364.500H1788.500Z" fill="url(#gb)" stroke="#3c3c3c"/>
<path d="M1794 349V345H1801V350M1796 351H1806V361H1796Z" fill="#d0d0d0" stroke="#333"/>
<!-- +/- -->
<g fill="url(#gb)" stroke="#3c3c3c">
<rect x="1767.500" y="463.500" width="21" height="22"/>
<path d="M1788.500 463.500H1807Q1811.500 463.500 1811.500 468V481Q1811.500 485.500 1807 485.500H1788.500Z"/>
<rect x="1767.500" y="982.500" width="21" height="21"/>
<path d="M1788.500 982.500H1807Q1811.500 982.500 1811.500 987V999Q1811.500 1003.500 1807 1003.500H1788.500Z"/>
</g>
<use href="#plus" x="1777.500" y="474"/><use href="#plus" x="1777.500" y="993"/>
<path d="M1794 474H1806M1794 993H1806" stroke="#f0f0f0" stroke-width="3"/>

<!-- resolution group -->
<rect x="1437.500" y="513.500" width="182" height="64" rx="10" fill="url(#gl)" stroke="#3c3c3c"/>
<g clip-path="url(#gr1)"><rect x="1437" y="556" width="183" height="22" fill="url(#gm)"/></g>
<rect x="1437.500" y="513.500" width="182" height="64" rx="10" fill="none" stroke="#3c3c3c"/>
<path d="M1438 534.500H1619M1438 555.500H1619" stroke="#3c3c3c"/>
<rect x="1630.500" y="513.500" width="181" height="64" rx="10" fill="url(#gl)" stroke="#3c3c3c"/>
<path d="M1631 534.500H1811M1631 555.500H1811" stroke="#3c3c3c"/>
<rect x="1437.500" y="601.500" width="182" height="42" rx="10" fill="url(#gl)" stroke="#3c3c3c"/>
<path d="M1438 622.500H1619" stroke="#3c3c3c"/>
<rect x="1630.500" y="644.500" width="181" height="21" rx="10" fill="url(#gl)" stroke="#3c3c3c"/>
<path d="M1719.500 645V665" stroke="#3c3c3c"/>
<use href="#la" x="1447" y="524"/><use href="#la" x="1447" y="545"/><use href="#la" x="1447" y="611"/><use href="#la" x="1447" y="632"/>
<use href="#ra" x="1611" y="524"/><use href="#ra" x="1611" y="545"/><use href="#ra" x="1611" y="611"/><use href="#ra" x="1611" y="632"/>
<use href="#la" x="1638" y="524"/><use href="#la" x="1638" y="545"/><use href="#la" x="1638" y="566"/><use href="#la" x="1638" y="655"/><use href="#la" x="1727" y="655"/>
<use href="#ra" x="1803" y="524"/><use href="#ra" x="1803" y="545"/><use href="#ra" x="1803" y="566"/><use href="#ra" x="1712" y="655"/><use href="#ra" x="1803" y="655"/>

<use href="#cb" x="1441" y="650"/><use href="#cb" x="1536" y="650" opacity=".55"/>

<!-- output -->
<path d="M1437.500 744Q1437.500 739.500 1442 739.500H1789.500V759.500H1442Q1437.500 759.500 1437.500 755Z" fill="url(#gl)" stroke="#3c3c3c"/>
<path d="M1789.500 739.500H1807Q1811.500 739.500 1811.500 744V755Q1811.500 759.500 1807 759.500H1789.500Z" fill="url(#gb)" stroke="#3c3c3c"/>
<path d="M1793 745H1801L1803 748H1808V756H1793Z" fill="#e0c878" stroke="#333" stroke-width=".8"/><rect x="1797" y="742" width="9" height="6" fill="#eee" stroke="#333" stroke-width=".6"/>
<use href="#cbc" x="1441" y="769"/><use href="#cbc" x="1632" y="769"/>
<use href="#cb" x="1441" y="793"/><use href="#cb" x="1632" y="793"/>
<rect x="1444" y="821" width="12" height="14" fill="#e8e8e8" stroke="#222" stroke-width=".7"/><rect x="1445" y="826" width="10" height="4" fill="#c85060"/><rect x="1445" y="830" width="10" height="4" fill="#6a6aa8"/>
<rect x="1629.500" y="817.500" width="182" height="21" rx="4.500" fill="url(#gd)" stroke="#2e2e2e"/>
<path d="M1749 818H1807Q1811.500 818 1811.500 822V834Q1811.500 838.500 1807 838.500H1749Z" fill="url(#ga)"/>
<path d="M1688.500 818V838M1748.500 818V838" stroke="#2e2e2e"/>
<rect x="1568.500" y="842.500" width="243" height="20" rx="4.500" fill="url(#gd)" stroke="#2e2e2e"/>
<path d="M1689 843H1807Q1811.500 843 1811.500 847V858Q1811.500 862.500 1807 862.500H1689Z" fill="url(#ga)"/>
<path d="M1688.500 843V862" stroke="#2e2e2e"/>
<use href="#cb" x="1441" y="892"/><use href="#cb" x="1632" y="892"/>
<use href="#cb" x="1456" y="925"/>
<use href="#cbc" x="1632" y="1012"/>

<!-- seed -->
<path d="M1437.500 1068Q1437.500 1058.500 1447 1058.500H1596.500V1080H1437.500Z" fill="url(#gl)" stroke="#3c3c3c"/>
<path d="M1596.500 1058.500H1610Q1619.500 1058.500 1619.500 1068V1080H1596.500Z" fill="url(#gb)" stroke="#3c3c3c"/>
<circle cx="1608" cy="1069" r="7" fill="#eee" stroke="#222"/><path d="M1608 1069L1612 1064M1608 1069L1612 1073" stroke="#b02828" stroke-width="1.200"/>
<path d="M1630.500 1068Q1630.500 1058.500 1640 1058.500H1802Q1811.500 1058.500 1811.500 1068V1080H1630.500Z" fill="url(#gl)" stroke="#3c3c3c"/>
<use href="#la" x="1447" y="1069"/><use href="#ra" x="1589" y="1069"/><use href="#la" x="1638" y="1069"/><use href="#ra" x="1803" y="1069"/>
<use href="#hat2" x="1429" y="1068"/>

<!-- bottom header -->
<rect x="10.500" y="1055.500" width="31" height="21" rx="5" fill="url(#gd)" stroke="#2e2e2e"/>
<path d="M16 1059H28V1067Q28 1071 22 1074 16 1071 16 1067Z" fill="#dedede" stroke="#222" stroke-width=".8"/><path d="M22 1059V1074L16 1071V1059Z" fill="#9a9a9a"/><use href="#ud" x="36" y="1066"/>
<rect x="255.500" y="1055.500" width="122" height="21" rx="5" fill="url(#gd)" stroke="#2e2e2e"/>
<path d="M261 1060L267 1057 273 1060V1071L267 1074 261 1071Z" fill="#e8a048"/><path d="M267 1063V1074L261 1071V1060Z" fill="#b87828"/><use href="#ud" x="371" y="1066"/>
<rect x="385.500" y="1055.500" width="37" height="21" rx="5" fill="url(#gd)" stroke="#2e2e2e"/>
<circle cx="396" cy="1066" r="6.500" fill="#f4f4f4"/><use href="#ud" x="415" y="1066"/>
<rect x="428.500" y="1055.500" width="58" height="21" rx="5" fill="url(#gd)" stroke="#2e2e2e"/>
<path d="M466 1056H482Q486 1056 486 1060V1072Q486 1076 482 1076H466Z" fill="url(#gb)"/>
<circle cx="437" cy="1062" r="4.500" fill="#5a8cc8"/><circle cx="442" cy="1070" r="4.500" fill="#f0f0f0"/><use href="#ud" x="459" y="1066"/>
<path d="M470 1060H482M470 1072H482M476 1058V1074M473 1066H479" stroke="#2e3a4e" stroke-dasharray="2 1" fill="none"/>
<rect x="493.500" y="1055.500" width="165" height="21" rx="5" fill="url(#gd)" stroke="#2e2e2e"/>
<rect x="514" y="1056" width="22" height="20" fill="url(#ga)"/>
<path d="M514.500 1056V1076M536.500 1056V1076M558.500 1056V1076M580.500 1056V1076" stroke="#2e2e2e"/>
<path d="M503 1061L497 1073" stroke="#38b038" stroke-width="2"/><path d="M503 1061L510 1073" stroke="#d03030" stroke-width="2"/><path d="M503 1058V1062" stroke="#2838c8" stroke-width="2"/>
<path d="M519 1072L530 1060M530 1060H525M530 1060V1065" stroke="#223" stroke-width="1.800" fill="none"/>
<path d="M541 1074Q542 1063 553 1060" stroke="#6a94d0" stroke-width="2" fill="none"/>
<path d="M563 1074L567 1063H575V1058" stroke="#6a94d0" stroke-width="2.400" fill="none"/>
<use href="#ud" x="651" y="1066"/>
<g stroke="#5a5a5a" stroke-width="1">
<rect x="665.500" y="1056.500" width="54" height="20" rx="3" fill="#a4a4a4"/>
<path d="M676 1057V1076M687 1057V1076M698 1057V1076M709 1057V1076M666 1066.500H719"/>
<rect x="725.500" y="1056.500" width="55" height="20" rx="3" fill="#a4a4a4"/>
<path d="M736.500 1057V1076M747.500 1057V1076M758.500 1057V1076M769.500 1057V1076M726 1066.500H780"/>
</g>
<circle cx="670" cy="1060" r="2" fill="#e8a030"/>
<rect x="786.500" y="1056.500" width="21" height="20" rx="4" fill="url(#gb)" stroke="#4a4a4a"/><rect x="791" y="1060" width="10" height="13" fill="#8a8a8a" stroke="#333" stroke-width=".8"/>
<rect x="814.500" y="1056.500" width="20" height="20" rx="4" fill="url(#gb)" stroke="#4a4a4a"/><circle cx="824" cy="1066" r="5.500" fill="#b0b0b0" stroke="#777" stroke-width="1.500"/>
<rect x="841.500" y="1055.500" width="21" height="21" rx="4" fill="url(#gb)" stroke="#4a4a4a"/><path d="M847 1062A5 5 0 0 1 857 1062L854 1072M851 1064L853 1072" stroke="#777" stroke-width="2.200" fill="none"/>
<rect x="862.500" y="1055.500" width="117" height="21" rx="1" fill="url(#gd)" stroke="#2e2e2e"/>
<path d="M899.500 1056V1076" stroke="#2e2e2e"/>
<path d="M868 1060L874 1057 880 1060V1072L874 1075 868 1072Z" fill="#e0e0e0"/><path d="M874 1060V1075L868 1072V1060Z" fill="#555"/><use href="#ud" x="892" y="1066"/>
<use href="#ud" x="972" y="1066"/>
<rect x="979.500" y="1055.500" width="21" height="21" rx="5" fill="url(#gb)" stroke="#4a4a4a"/><circle cx="987" cy="1068" r="6" fill="#b8b8b8" stroke="#222"/><path d="M990 1064L997 1058" stroke="#4a78c0" stroke-width="2.400"/>
<rect x="1006.500" y="1055.500" width="42" height="21" rx="5" fill="url(#gb)" stroke="#4a4a4a"/><path d="M1027.500 1056V1076" stroke="#4a4a4a"/>
<use href="#cam" x="1016" y="1067"/><circle cx="1024" cy="1059" r="2.500" fill="#f4e070"/>
<rect x="1031" y="1065" width="14" height="9" fill="#2e2e2e" stroke="#ddd" stroke-width=".6"/><path d="M1031 1061L1045 1057 1046 1061 1032 1065Z" fill="#444" stroke="#eee" stroke-width=".6"/>
</svg>

<!-- top menu -->
<span class="n" style="left:346px;top:8px">File</span>
<span class="n" style="left:387px;top:8px">Render</span>
<span class="n" style="left:447px;top:8px">Window</span>
<span class="n" style="left:513px;top:8px">Help</span>
<span style="left:595px;top:9px">Default</span>
<span style="left:810px;top:9px">Scene</span>
<span style="left:941px;top:9px;color:#666">2</span>
<span class="w" style="left:1031px;top:9px">Cycles Render</span>
<span style="left:1192px;top:8px;transform:scaleX(.829)">v2.77 | Verts:50,711 | Faces:50,120 | Tris:100,208 | Objects:0/10 | Lamps:0/0 | Mem:16.73M | CoffeeMaker</span>

<!-- viewport labels -->
<span class="v" style="left:23px;top:41px">Top Ortho</span>
<span class="v" style="left:23px;top:63px">Meters</span>
<span class="v" style="left:736px;top:41px">Camera Persp</span>
<span class="v" style="left:736px;top:63px">Meters</span>
<span class="v" style="left:23px;top:552px">Front Ortho</span>
<span class="v" style="left:23px;top:574px">Meters</span>
<span class="v" style="left:736px;top:552px">Right Ortho</span>
<span class="v" style="left:736px;top:574px">Meters</span>
<span class="v n" style="left:77px;top:518px">(1) CoffeeMaker</span>
<span class="v n" style="left:791px;top:518px">(1) CoffeeMaker</span>
<span class="v n" style="left:77px;top:1029px">(1) CoffeeMaker</span>
<span class="v n" style="left:791px;top:1029px">(1) CoffeeMaker</span>
<span style="left:32px;top:472px;color:#1c9a1c">y</span>
<span style="left:59px;top:498px;color:#a82020">x</span>
<span style="left:765px;top:492px;color:#1c9a1c">y</span>
<span style="left:765px;top:505px;color:#a82020">x</span>
<span style="left:32px;top:982px;color:#2020a8">z</span>
<span style="left:59px;top:1011px;color:#a82020">x</span>
<span style="left:744px;top:982px;color:#2020a8">z</span>
<span style="left:774px;top:1011px;color:#1c9a1c">y</span>

<!-- outliner -->
<span class="n" style="left:1484px;top:38px">View</span>
<span class="n" style="left:1534px;top:38px">Search</span>
<span class="w" style="left:1594px;top:38px">All Scenes</span>
<span class="n" style="left:1474px;top:64px">Scene</span>
<span class="n" style="left:1495px;top:85px">RenderLayers</span>
<span class="n" style="left:1495px;top:107px">World</span>
<span class="n" style="left:1495px;top:129px">Camera</span>
<span class="k n" style="left:1495px;top:151px">CoffeeMaker</span>

<!-- properties -->
<span style="left:1485px;top:254px">Scene</span>
<span class="h" style="left:1456px;top:286px">Render</span>
<span class="c" style="left:1508px;top:320px">Render</span>
<span class="c" style="left:1632px;top:320px">Animation</span>
<span class="c" style="left:1757px;top:320px">Audio</span>
<span style="left:1445px;top:347px">Display:</span>
<span class="w" style="left:1575px;top:347px">Image Editor</span>
<span style="left:1445px;top:375px">Feature Set:</span>
<span class="w" style="left:1575px;top:375px">Supported</span>
<span style="left:1445px;top:402px">Device:</span>
<span class="w" style="left:1575px;top:402px">GPU Compute</span>
<span class="h" style="left:1456px;top:433px">Dimensions</span>
<span class="w" style="left:1445px;top:468px">Render Presets</span>
<span style="left:1445px;top:495px">Resolution:</span>
<span style="left:1638px;top:495px">Frame Range:</span>
<span style="left:1454px;top:517px">X:</span>
<span class="r" style="left:1601px;top:517px">1200 px</span>
<span style="left:1454px;top:538px">Y:</span>
<span class="r" style="left:1601px;top:538px">1200 px</span>
<span class="r" style="left:1602px;top:559px">100%</span>
<span style="left:1646px;top:517px">Start Frame:</span>
<span class="r" style="left:1793px;top:517px">1</span>
<span style="left:1646px;top:538px">End Frame:</span>
<span class="r" style="left:1793px;top:538px">1</span>
<span style="left:1646px;top:559px">Frame Step:</span>
<span class="r" style="left:1793px;top:559px">1</span>
<span style="left:1445px;top:583px">Aspect Ratio:</span>
<span style="left:1638px;top:583px">Frame Rate:</span>
<span style="left:1454px;top:604px">X:</span>
<span class="r" style="left:1602px;top:604px">1.000</span>
<span style="left:1454px;top:625px">Y:</span>
<span class="r" style="left:1602px;top:625px">1.000</span>
<span class="w" style="left:1638px;top:604px">24 fps</span>
<span style="left:1638px;top:626px">Time Remapping:</span>
<span style="left:1646px;top:648px">Old:</span>
<span class="r" style="left:1701px;top:648px">100</span>
<span style="left:1736px;top:648px">New:</span>
<span class="r" style="left:1794px;top:648px">100</span>
<span style="left:1464px;top:650px">Border</span>
<span class="f" style="left:1560px;top:650px">Crop</span>
<span class="h" style="left:1456px;top:682px">Metadata</span>
<span class="h" style="left:1456px;top:708px">Output</span>
<span style="left:1445px;top:742px">//003</span>
<span class="k" style="left:1464px;top:770px">Overwrite</span>
<span class="k" style="left:1656px;top:770px">File Extensions</span>
<span style="left:1464px;top:794px">Placeholders</span>
<span style="left:1656px;top:794px">Cache Result</span>
<span class="w" style="left:1462px;top:821px">OpenEXR</span>
<span class="c k" style="left:1658px;top:821px">BW</span>
<span class="c k" style="left:1717px;top:821px">RGB</span>
<span class="c" style="left:1779px;top:821px;color:#10203a">RGBA</span>
<span style="left:1445px;top:845px">Color Depth:</span>
<span class="c k" style="left:1627px;top:845px">Float (Half)</span>
<span class="c" style="left:1749px;top:845px;color:#10203a">Float (Full)</span>
<span style="left:1445px;top:869px">Codec:</span>
<span class="w" style="left:1575px;top:869px">ZIP (lossless)</span>
<span style="left:1464px;top:894px">Z Buffer</span>
<span style="left:1656px;top:894px">Preview</span>
<span class="h" style="left:1478px;top:924px">Freestyle</span>
<span class="h" style="left:1456px;top:951px">Sampling</span>
<span class="w" style="left:1445px;top:985px">Sampling Presets</span>
<span class="w" style="left:1445px;top:1013px">Path Tracing</span>
<span class="k" style="left:1656px;top:1013px">Square Samples</span>
<span style="left:1445px;top:1040px">Settings:</span>
<span style="left:1638px;top:1040px">Samples:</span>
<span style="left:1454px;top:1061px">Seed:</span>
<span class="r" style="left:1580px;top:1061px">0</span>
<span style="left:1646px;top:1061px">Render:</span>
<span class="r" style="left:1793px;top:1061px">30</span>

<!-- bottom header -->
<span class="n" style="left:57px;top:1058px;transform:scaleX(.82)">View</span>
<span class="n" style="left:106px;top:1058px;transform:scaleX(.82)">Select</span>
<span class="n" style="left:161px;top:1058px;transform:scaleX(.82)">Add</span>
<span class="n" style="left:205px;top:1058px;transform:scaleX(.82)">Object</span>
<span class="w" style="left:281px;top:1058px">Object Mode</span>
<span class="w" style="left:588px;top:1058px">Global</span>
<span class="w" style="left:908px;top:1058px">Closest</span>
</body></html>
